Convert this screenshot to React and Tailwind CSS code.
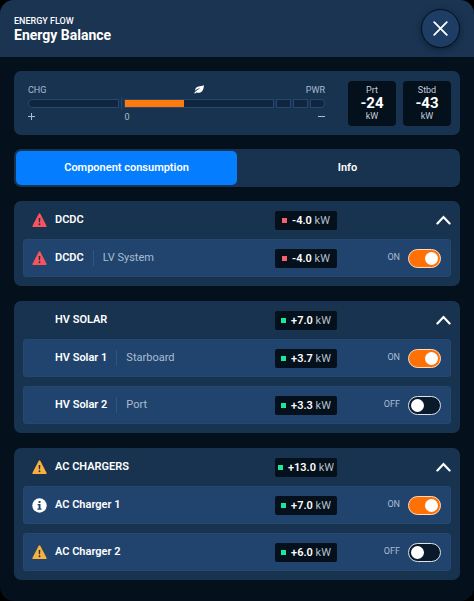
import { useState } from "react";

const GROUPS = [
  {
    name: "DCDC",
    status: "alarm",
    power: "-4.0",
    items: [{ name: "DCDC", detail: "LV System", status: "alarm", power: "-4.0", on: true }],
  },
  {
    name: "HV SOLAR",
    power: "+7.0",
    items: [
      { name: "HV Solar 1", detail: "Starboard", power: "+3.7", on: true },
      { name: "HV Solar 2", detail: "Port", power: "+3.3", on: false },
    ],
  },
  {
    name: "AC CHARGERS",
    status: "warning",
    power: "+13.0",
    items: [
      { name: "AC Charger 1", status: "info", power: "+7.0", on: true },
      { name: "AC Charger 2", status: "warning", power: "+6.0", on: false },
    ],
  },
];

function StatusIcon({ status }) {
  if (status === "info") {
    return (
      <svg viewBox="0 0 15 15" className="size-[15px]" aria-label="Info">
        <circle cx="7.5" cy="7.5" r="7.2" fill="#fff" />
        <path d="M6.6 3h1.9v1.9H6.6zM5.6 6h2.9v4.4h1v1.4H5.4v-1.4h1.2V7.3h-1z" fill="#1f416a" />
      </svg>
    );
  }
  if (status) {
    return (
      <svg
        viewBox="0 0 15 15"
        className={status === "alarm" ? "size-[15px] text-[#f8545e]" : "size-[15px] text-[#fbb03b]"}
        aria-label={status}
      >
        <path
          d="M7.5 1.2 13.7 13.2H1.3Z"
          fill="currentColor"
          stroke="currentColor"
          strokeWidth="1.8"
          strokeLinejoin="round"
        />
        <path d="M6.7 5h1.6l-.2 4.2H6.9z" fill="#1c3350" />
        <circle cx="7.5" cy="11.2" r="0.95" fill="#1c3350" />
      </svg>
    );
  }
  return null;
}

function PowerPill({ value }) {
  return (
    <div className="flex h-[19px] w-[62px] shrink-0 items-center justify-center gap-[5px] rounded-[2px] bg-[#04101b] text-[11px] leading-none">
      <span className={value.startsWith("-") ? "size-[5px] bg-[#f8606a]" : "size-[5px] bg-[#1ce89a]"} />
      <span className="whitespace-nowrap text-[#b4c0cd]">
        <span className="font-semibold text-white">{value}</span> kW
      </span>
    </div>
  );
}

function Item({ item }) {
  const [on, setOn] = useState(item.on);
  return (
    <li className="flex h-[38px] items-center rounded-[3px] border border-[#25486f] bg-[#21446e] pr-[9px] pl-2">
      <div className="flex min-w-0 flex-1 items-center">
        <span className="mr-2 w-[15px] shrink-0">
          <StatusIcon status={item.status} />
        </span>
        <span className="whitespace-nowrap font-semibold">{item.name}</span>
        {item.detail && (
          <span className="ml-[9px] border-l border-[#2b568a] pl-[9px] whitespace-nowrap text-[#a9bcd2]">
            {item.detail}
          </span>
        )}
      </div>
      <PowerPill value={item.power} />
      <label className="flex w-[104px] items-center justify-end gap-2 text-[9px] text-[#a9bcd2]">
        {on ? "ON" : "OFF"}
        <input
          type="checkbox"
          role="switch"
          aria-label={item.name}
          checked={on}
          onChange={(e) => setOn(e.target.checked)}
          className="flex h-[19px] w-[33px] appearance-none items-center rounded-full border border-[#dbe3ec] bg-[#0a1a2a] px-0.5 before:size-[13px] before:rounded-full before:bg-white checked:justify-end checked:border-[#ffdcbd] checked:bg-[#ff7005]"
        />
      </label>
    </li>
  );
}

function Group({ group }) {
  const [open, setOpen] = useState(true);
  return (
    <section className="rounded-[7px] bg-[#18334f] px-[9px] pb-[9px]">
      <div className="flex h-[38px] items-center pl-[9px]">
        <div className="flex min-w-0 flex-1 items-center">
          <span className="mr-2 w-[15px] shrink-0">
            <StatusIcon status={group.status} />
          </span>
          <h2 className="whitespace-nowrap font-semibold">{group.name}</h2>
        </div>
        <PowerPill value={group.power} />
        <div className="flex w-[114px] justify-end">
          <button type="button" aria-label={"Toggle " + group.name} aria-expanded={open} onClick={() => setOpen(!open)}>
            <svg viewBox="0 0 15 10" className="h-[10px] w-[15px]" fill="none" stroke="#fff" strokeWidth="2.2" strokeLinecap="round">
              <path d={open ? "M1.4 8.4 7.5 2l6.1 6.4" : "M1.4 2 7.5 8.4 13.6 2"} />
            </svg>
          </button>
        </div>
      </div>
      {open && (
        <ul className="flex flex-col gap-[9px]">
          {group.items.map((item) => (
            <Item key={item.name} item={item} />
          ))}
        </ul>
      )}
    </section>
  );
}

function Readout({ label, value }) {
  return (
    <div className="flex h-[45px] w-12 flex-col items-center justify-center rounded-[4px] bg-[#04101b] text-[9px] leading-[12px] text-[#c3cedb]">
      <span>{label}</span>
      <strong className="text-[15px] leading-[14px] font-bold text-white">{value}</strong>
      <span>kW</span>
    </div>
  );
}

function Gauge() {
  return (
    <div className="grid flex-1 grid-cols-[91fr_1px_149fr_15px_15px_15px] items-center gap-x-0.5 text-[9px] leading-[14px] text-[#a9bcd2]">
      <span>CHG</span>
      <svg viewBox="0 0 20 18" className="col-start-3 h-[9px] w-[10px] justify-self-center" aria-hidden="true">
        <path
          d="M19.500 0C16 2.500 13 2.200 9 3 4.500 4 1.800 7 2.300 11.500 5 8.500 8 7 12.500 6.300 8 8.500 3.500 11.500.5 16L2 17.500 4.300 14.800C11 17.500 20.500 14 19.500 0Z"
          fill="#fff"
        />
      </svg>
      <span className="col-span-3 text-right">PWR</span>

      <span className="h-[9px] rounded-l-[4px] border border-[#24486f] bg-[#10263e]" />
      <span className="h-[13px] bg-[#24486f]" />
      <span className="h-[9px] border border-[#24486f] bg-[#10263e]">
        <span className="block h-full w-2/5 bg-[#ff7a0c]" />
      </span>
      <span className="h-[9px] border border-[#24486f] bg-[#10263e]" />
      <span className="h-[9px] border border-[#24486f] bg-[#10263e]" />
      <span className="h-[9px] rounded-r-[4px] border border-[#24486f] bg-[#10263e]" />

      <svg viewBox="0 0 7 7" className="size-[7px]" stroke="#a9bcd2" aria-label="plus">
        <path d="M0 3.500h7M3.500 0v7" />
      </svg>
      <span className="col-start-3">0</span>
      <svg viewBox="0 0 7 7" className="col-start-6 size-[7px] justify-self-end" stroke="#a9bcd2" aria-label="minus">
        <path d="M0 3.500h7" />
      </svg>
    </div>
  );
}

export default function App() {
  const [tab, setTab] = useState("consumption");
  const tabClass = "flex-1 rounded-[5px] text-[11px] font-semibold";
  return (
    <div className="bg-black font-['Roboto','Liberation_Sans',sans-serif] text-white">
      <div className="min-h-screen overflow-hidden rounded-[14px] bg-[#04101b]">
        <header className="flex h-[57px] items-center justify-between bg-[#1a3452] px-[14px]">
          <div>
            <p className="text-[9px] leading-[12px] font-medium">ENERGY FLOW</p>
            <h1 className="text-[14px] leading-[16px] font-bold">Energy Balance</h1>
          </div>
          <button
            type="button"
            aria-label="Close"
            className="flex size-[39px] items-center justify-center rounded-full border border-[#04101b] bg-[#1d3d64] shadow-[0_2px_6px_rgba(4,16,27,0.5)]"
          >
            <svg viewBox="0 0 15 15" className="size-[15px]" stroke="#fff" strokeWidth="1.800" strokeLinecap="round">
              <path d="M1.200 1.200 13.800 13.800M13.800 1.200 1.200 13.800" />
            </svg>
          </button>
        </header>

        <main className="flex flex-col gap-[14px] p-[14px]">
          <section className="flex h-16 items-center rounded-[7px] bg-[#18334f] pr-[9px] pl-[14px]">
            <Gauge />
            <div className="ml-[23px] flex gap-[7px]">
              <Readout label="Prt" value="-24" />
              <Readout label="Stbd" value="-43" />
            </div>
          </section>

          <div role="tablist" className="flex h-[38px] rounded-[7px] bg-[#18334f] p-0.5">
            <button
              type="button"
              role="tab"
              aria-selected={tab === "consumption"}
              onClick={() => setTab("consumption")}
              className={tab === "consumption" ? tabClass + " bg-[#047dff]" : tabClass}
            >
              Component consumption
            </button>
            <button
              type="button"
              role="tab"
              aria-selected={tab === "info"}
              onClick={() => setTab("info")}
              className={tab === "info" ? tabClass + " bg-[#047dff]" : tabClass}
            >
              Info
            </button>
          </div>

          <div className="flex flex-col gap-[15px] text-[11px]">
            {GROUPS.map((group) => (
              <Group key={group.name} group={group} />
            ))}
          </div>
        </main>
      </div>
    </div>
  );
}
